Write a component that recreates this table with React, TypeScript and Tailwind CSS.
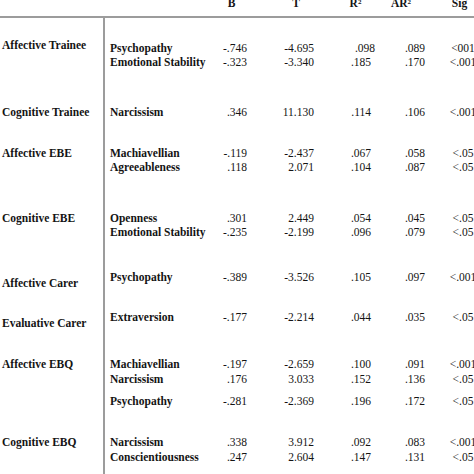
const line = 'border-[#9c9c9c]';

type Pred = { name: string; b: string; t: string; r2: string; ar2: string; sig: string; cls?: string };
type Group = { label: string; h: string; labelMt: string; predMt: string; preds: Pred[] };

const groups: Group[] = [
  {
    label: 'Affective Trainee',
    h: 'h-[72px]',
    labelMt: 'mt-[20px]',
    predMt: 'mt-[23px]',
    preds: [
      { name: 'Psychopathy', b: '-.746', t: '-4.695', r2: '.098', ar2: '.089', sig: '<001' },
      { name: 'Emotional Stability', b: '-.323', t: '-3.340', r2: '.185', ar2: '.170', sig: '<.001' },
    ],
  },
  {
    label: 'Cognitive Trainee',
    h: 'h-[42px]',
    labelMt: 'mt-[15px]',
    predMt: 'mt-[15px]',
    preds: [{ name: 'Narcissism', b: '.346', t: '11.130', r2: '.114', ar2: '.106', sig: '<.001' }],
  },
  {
    label: 'Affective EBE',
    h: 'h-[68px]',
    labelMt: 'mt-[14px]',
    predMt: 'mt-[14px]',
    preds: [
      { name: 'Machiavellian', b: '-.119', t: '-2.437', r2: '.067', ar2: '.058', sig: '<.05' },
      { name: 'Agreeableness', b: '.118', t: '2.071', r2: '.104', ar2: '.087', sig: '<.05' },
    ],
  },
  {
    label: 'Cognitive EBE',
    h: 'h-[55px]',
    labelMt: 'mt-[11px]',
    predMt: 'mt-[11px]',
    preds: [
      { name: 'Openness', b: '.301', t: '2.449', r2: '.054', ar2: '.045', sig: '<.05' },
      { name: 'Emotional Stability', b: '-.235', t: '-2.199', r2: '.096', ar2: '.079', sig: '<.05' },
    ],
  },
  {
    label: 'Affective Carer',
    h: 'h-[45px]',
    labelMt: 'mt-[21px]',
    predMt: 'mt-[15px]',
    preds: [{ name: 'Psychopathy', b: '-.389', t: '-3.526', r2: '.105', ar2: '.097', sig: '<.001' }],
  },
  {
    label: 'Evaluative Carer',
    h: 'h-[40px]',
    labelMt: 'mt-[16px]',
    predMt: 'mt-[10px]',
    preds: [{ name: 'Extraversion', b: '-.177', t: '-2.214', r2: '.044', ar2: '.035', sig: '<.05' }],
  },
  {
    label: 'Affective EBQ',
    h: 'h-[80px]',
    labelMt: 'mt-[17px]',
    predMt: 'mt-[17px]',
    preds: [
      { name: 'Machiavellian', b: '-.197', t: '-2.659', r2: '.100', ar2: '.091', sig: '<.001' },
      { name: 'Narcissism', b: '.176', t: '3.033', r2: '.152', ar2: '.136', sig: '<.05', cls: 'mt-[1px]' },
      { name: 'Psychopathy', b: '-.281', t: '-2.369', r2: '.196', ar2: '.172', sig: '<.05', cls: 'mt-[8px]' },
    ],
  },
  {
    label: 'Cognitive EBQ',
    h: 'h-[80px]',
    labelMt: 'mt-[15px]',
    predMt: 'mt-[15px]',
    preds: [
      { name: 'Narcissism', b: '.338', t: '3.912', r2: '.092', ar2: '.083', sig: '<.001' },
      { name: 'Conscientiousness', b: '.247', t: '2.604', r2: '.147', ar2: '.131', sig: '<.05', cls: 'mt-[1px]' },
    ],
  },
];

const cols = 'grid grid-cols-[110px_32px_67px_57px_54px_76px]';

function PredRow({ p }: { p: Pred }) {
  return (
    <div className={`${cols} leading-[14px] ${p.cls ?? ''}`}>
      <div className="pl-[5px] font-bold whitespace-nowrap">{p.name}</div>
      <div className="text-right whitespace-nowrap">{p.b}</div>
      <div className="text-right whitespace-nowrap">{p.t}</div>
      <div className={`text-right whitespace-nowrap ${p.r2 === '.098' && p.name === 'Psychopathy' && p.b === '-.746' ? 'mr-[-4px]' : ''}`}>{p.r2}</div>
      <div className="text-right whitespace-nowrap">{p.ar2}</div>
      <div className="text-center whitespace-nowrap">{p.sig}</div>
    </div>
  );
}

export default function App() {
  return (
    <div
      className="w-[474px] h-[474px] overflow-hidden bg-white text-[#141414] text-[11.5px]"
      style={{ fontFamily: '"Liberation Serif", "Times New Roman", serif' }}
    >
      <div className={`h-[18px] border-b-2 ${line} grid grid-cols-[215px_33px_96px_23px_68px_49px] leading-[7px] font-bold`}>
        <div />
        <div className="text-center">B</div>
        <div className="text-center">T</div>
        <div className="text-center whitespace-nowrap">
          R<sup className="text-[7px]">2</sup>
        </div>
        <div className="text-center whitespace-nowrap">
          AR<sup className="text-[7px]">2</sup>
        </div>
        <div className="text-center">Sig</div>
      </div>

      <div className="flex flex-col">
        {groups.map((g, i) => (
          <div key={i} className={`flex ${g.h}`}>
            <div className="w-[103px] shrink-0 pl-[2px]">
              <div className={`${g.labelMt} font-bold leading-[14px] whitespace-nowrap`}>{g.label}</div>
            </div>
            <div className={`flex-1 border-l-2 ${line}`}>
              <div className={g.predMt}>
                {g.preds.map((p, j) => (
                  <PredRow key={j} p={p} />
                ))}
              </div>
            </div>
          </div>
        ))}
      </div>
    </div>
  );
}
